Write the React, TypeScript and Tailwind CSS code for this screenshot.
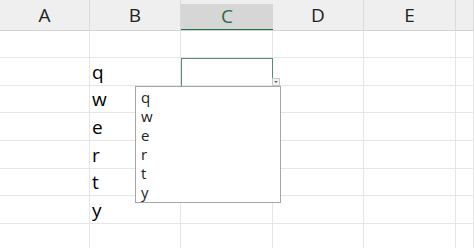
import React from "react";

const cols = [
  { key: "A", w: "w-[90px]" },
  { key: "B", w: "w-[91px]" },
  { key: "C", w: "w-[92px]" },
  { key: "D", w: "w-[91px]" },
  { key: "E", w: "w-[92px]" },
  { key: "", w: "flex-1" },
];

const rowHeights = ["h-[27px]", "h-[28px]", "h-[27px]", "h-[28px]", "h-[28px]", "h-[27px]", "h-[28px]", "h-[28px]"];
const values = ["", "q", "w", "e", "r", "t", "y", ""];
const options = ["q", "w", "e", "r", "t", "y"];

export default function App() {
  return (
    <div
      className="relative w-[474px] h-[248px] overflow-hidden bg-white text-black"
      style={{ fontFamily: '"Open Sans", "Noto Sans", sans-serif' }}
    >
      {/* column headers */}
      <div className="flex h-[31px] bg-[#efefef] border-b border-[#d4d4d4]">
        {cols.map((c) =>
          c.key === "C" ? (
            <div
              key="C"
              className={`${c.w} mt-[4px] flex items-center justify-center bg-[#d6d6d6] border-b border-[#217346] text-[19px] text-[#2a6b4a]`}
            >
              C
            </div>
          ) : (
            <div
              key={c.key || "f"}
              className={`${c.w} flex items-center justify-center border-r border-[#dadada] text-[19px] text-[#222]`}
            >
              {c.key}
            </div>
          )
        )}
      </div>

      {/* cells */}
      {rowHeights.map((h, r) => (
        <div key={r} className={`flex ${h} border-b border-[#e6e6e6]`}>
          {cols.map((c, ci) => (
            <div
              key={ci}
              className={`${c.w} border-r border-[#e6e6e6] flex items-end pl-[2px] pb-[1px] text-[19px] leading-[24px]`}
            >
              {ci === 1 ? values[r] : ""}
            </div>
          ))}
        </div>
      ))}

      {/* active cell */}
      <div className="absolute left-[181px] top-[58px] w-[92px] h-[29px] border border-[#5b8a72]" />

      {/* dropdown button */}
      <div className="absolute left-[272px] top-[78px] w-[8px] h-[8px] bg-[#f3f3f3] border border-[#c8c8c8] flex items-center justify-center">
        <div className="w-0 h-0 border-l-[2px] border-r-[2px] border-t-[2px] border-l-transparent border-r-transparent border-t-[#666]" />
      </div>

      {/* list */}
      <div className="absolute left-[135px] top-[86px] w-[146px] h-[117px] bg-white border border-[#a6a6a6] pt-[1px] pl-[5px]">
        {options.map((o) => (
          <div key={o} className="h-[19px] leading-[19px] text-[15px] text-[#222]">
            {o}
          </div>
        ))}
      </div>
    </div>
  );
}
